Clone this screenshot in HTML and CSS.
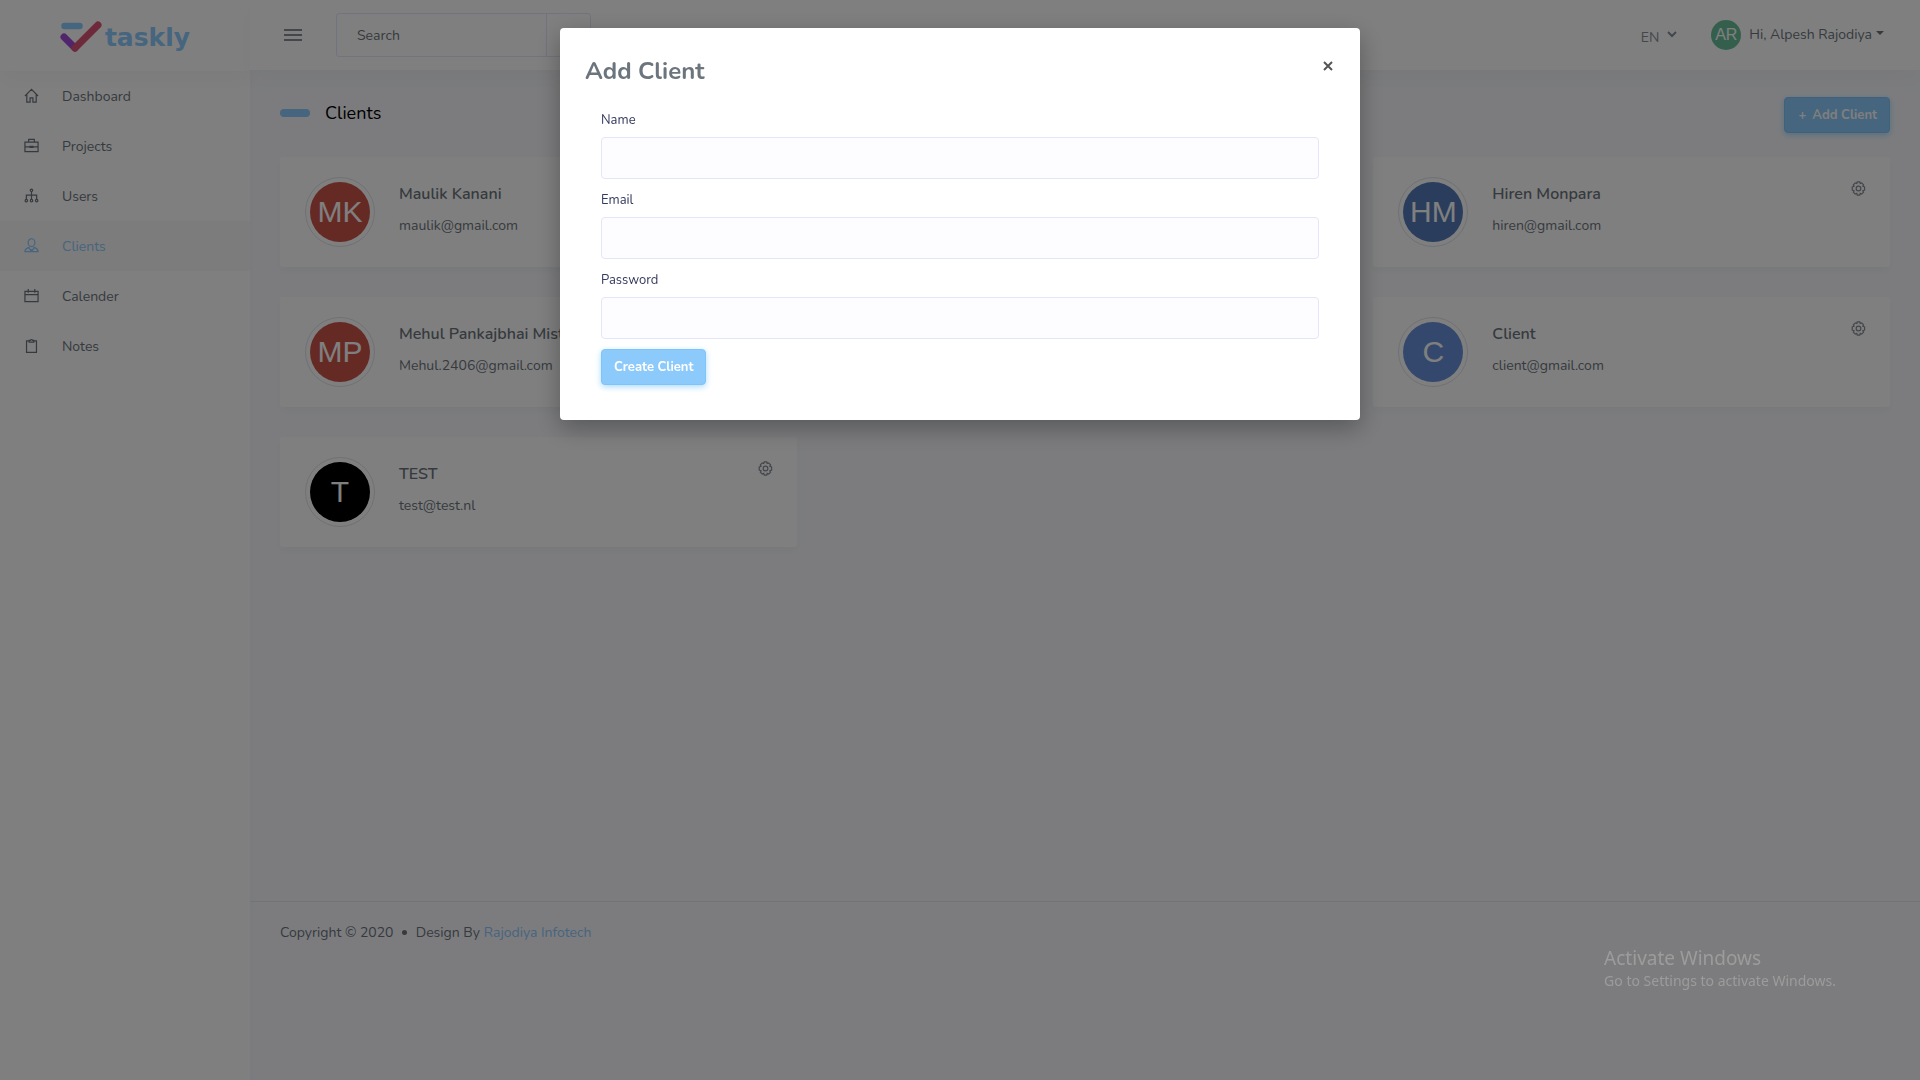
FILE: index.html
```html
<!DOCTYPE html>
<html lang="en">
  <head>
    <meta charset="UTF-8" />
    <meta name="viewport" content="width=device-width, initial-scale=1.0" />
    <title>Clients - Taskly</title>
    <link rel="stylesheet" href="styles.css">
  </head>
  <body>
    <div class="app">
      <aside class="sidebar">
        <a class="brand" href="#">
          <svg class="brand-mark" viewBox="0 0 42 32" fill="none" stroke-width="7" stroke-linecap="round">
            <path d="M4.500 6h15" stroke="#8dcafc" stroke-width="6.500" />
            <path d="M4 17l11 11" stroke="#a24bd8" />
            <path d="M15 28L38 5" stroke="#dc5276" />
          </svg>
          <span class="brand-name">taskly</span>
        </a>
        <nav class="menu">
          <a href="#">
            <svg class="icon" viewBox="0 0 16 16"><path d="M1 8.500L8 1.500l7 7M3 7v8h3.500v-4.500h3V15H13V7" /></svg>
            Dashboard
          </a>
          <a href="#">
            <svg class="icon" viewBox="0 0 16 16"><path d="M1 4.500h14v10H1zM5 4.500v-3h6v3M1 9.500h5.500M9.500 9.500H15M6.500 9h3v1h-3z" /></svg>
            Projects
          </a>
          <a href="#">
            <svg class="icon" viewBox="0 0 16 16"><circle cx="8" cy="2.500" r="1.300" /><circle cx="2.500" cy="13.500" r="1.300" /><circle cx="8" cy="13.500" r="1.300" /><circle cx="13.500" cy="13.500" r="1.300" /><path d="M8 4v8M2.500 12V7.500h11V12" /></svg>
            Users
          </a>
          <a class="active" href="#">
            <svg class="icon" viewBox="0 0 16 16"><ellipse cx="8" cy="5" rx="3.600" ry="4.200" /><path d="M6 9.500C3.500 11 1 11 1 14.500h14c0-3.500-2.500-3.500-5-5M5 11l3 2 3-2M8 13l-2 1.500M8 13l2 1.500" /></svg>
            Clients
          </a>
          <a href="#">
            <svg class="icon" viewBox="0 0 16 16"><path d="M1 3.500h14v11H1zM1 7h14M4.500 1v4M11.500 1v4" /></svg>
            Calender
          </a>
          <a href="#">
            <svg class="icon" viewBox="0 0 16 16"><path d="M5 3H2.700v12.300h10.600V3H11M5.500 4.500V2.500h1.300a1.300 1.300 0 0 1 2.400 0h1.300v2z" /></svg>
            Notes
          </a>
        </nav>
      </aside>

      <div class="page">
        <header class="topbar">
          <button class="toggle" type="button" aria-label="Toggle menu">
            <svg viewBox="0 0 18 12"><path d="M0 1h18M0 6h18M0 11h18" /></svg>
          </button>
          <form class="search">
            <input type="search" placeholder="Search" aria-label="Search" />
            <button type="submit" aria-label="Search"></button>
          </form>
          <button class="lang" type="button">
            EN
            <svg viewBox="0 0 10 10"><path d="M1 2l4 4 4-4" /></svg>
          </button>
          <button class="user" type="button">
            <span class="user-avatar">AR</span>
            <span class="user-name">Hi, Alpesh Rajodiya</span>
          </button>
        </header>

        <main class="content">
          <div class="section-header">
            <h1>Clients</h1>
            <button class="btn" type="button"><span class="plus">+</span>Add Client</button>
          </div>

          <div class="clients">
            <article class="card">
              <div class="avatar"><span class="red">MK</span></div>
              <div class="info">
                <h2>Maulik Kanani</h2>
                <p>maulik@gmail.com</p>
              </div>
            </article>
            <article class="card last">
              <div class="avatar"><span class="navy">HM</span></div>
              <div class="info">
                <h2>Hiren Monpara</h2>
                <p>hiren@gmail.com</p>
              </div>
              <button class="settings" type="button" aria-label="Settings">
                <svg class="icon" viewBox="0 0 16 16"><use href="#gear" /></svg>
              </button>
            </article>
            <article class="card">
              <div class="avatar"><span class="red">MP</span></div>
              <div class="info">
                <h2>Mehul Pankajbhai Mistry</h2>
                <p>Mehul.2406@gmail.com</p>
              </div>
            </article>
            <article class="card last">
              <div class="avatar"><span class="blue">C</span></div>
              <div class="info">
                <h2>Client</h2>
                <p>client@gmail.com</p>
              </div>
              <button class="settings" type="button" aria-label="Settings">
                <svg class="icon" viewBox="0 0 16 16"><use href="#gear" /></svg>
              </button>
            </article>
            <article class="card">
              <div class="avatar"><span class="black">T</span></div>
              <div class="info">
                <h2>TEST</h2>
                <p>test@test.nl</p>
              </div>
              <button class="settings" type="button" aria-label="Settings">
                <svg class="icon" viewBox="0 0 16 16"><use href="#gear" /></svg>
              </button>
            </article>
          </div>
        </main>

        <footer class="footer">
          Copyright © 2020 <span class="dot"></span> Design By <a href="#">Rajodiya Infotech</a>
        </footer>
      </div>
    </div>

    <div class="backdrop">
      <div class="modal" role="dialog" aria-modal="true" aria-labelledby="modalTitle">
        <div class="modal-header">
          <h2 id="modalTitle">Add Client</h2>
          <button class="close" type="button" aria-label="Close">
            <svg viewBox="0 0 10 10"><path d="M1 1l8 8M9 1L1 9" /></svg>
          </button>
        </div>
        <form class="modal-body">
          <label for="name">Name</label>
          <input type="text" id="name" />
          <label for="email">Email</label>
          <input type="email" id="email" />
          <label for="password">Password</label>
          <input type="password" id="password" />
          <button class="btn" type="submit">Create Client</button>
        </form>
      </div>
    </div>

    <div class="watermark">
      <p class="watermark-title">Activate Windows</p>
      <p>Go to Settings to activate Windows.</p>
    </div>

    <svg class="sprite" aria-hidden="true">
      <symbol id="gear" viewBox="0 0 16 16">
        <circle cx="8" cy="8" r="2.500" />
        <path d="M6.700 1h2.600l.5 1.700 1.600-.7 2 2-.8 1.600 1.900.8v3.200l-1.900.8.8 1.600-2 2-1.600-.8-.5 1.800H6.700l-.6-1.800-1.600.8-2-2 .8-1.600L1.300 9.600V6.400l2-.8-.8-1.600 2-2 1.600.7z" />
      </symbol>
    </svg>
  </body>
</html>
```

FILE: styles.css
```css
* {
  box-sizing: border-box;
}

body {
  margin: 0;
  font-family: "Nunito", "Open Sans", sans-serif;
  font-size: 14px;
  line-height: 24px;
  color: #6c757d;
  background-color: #f8f9fc;
}

h1,
h2,
p {
  margin: 0;
}

a {
  color: #8dcafc;
  text-decoration: none;
}

button,
input {
  font-family: inherit;
  font-size: 14px;
  color: inherit;
}

button {
  padding: 0;
  border: none;
  background: none;
  cursor: pointer;
}

svg {
  fill: none;
  stroke: currentColor;
}

.icon {
  width: 15px;
  height: 15px;
  stroke-width: 1.3;
}

.sprite {
  display: none;
}

.app {
  display: flex;
  min-height: 100vh;
}

/* Sidebar */
.sidebar {
  width: 250px;
  flex-shrink: 0;
  background-color: #fff;
  box-shadow: 0 4px 8px rgba(0, 0, 0, 0.03);
}

.brand {
  display: flex;
  align-items: center;
  justify-content: center;
  gap: 3px;
  height: 71px;
  font-family: "DejaVu Sans", sans-serif;
  font-size: 25px;
  font-weight: bold;
  box-shadow: 0 10px 20px rgba(0, 0, 0, 0.03);
}

.brand-mark {
  width: 42px;
  height: 32px;
}

.brand-name {
  padding-top: 5px;
}

.menu a {
  display: flex;
  align-items: center;
  gap: 23px;
  height: 50px;
  padding: 2px 0 0 24px;
  color: #6c757d;
}

.menu .icon {
  margin-bottom: 4px;
}

.menu a.active {
  color: #8dcafc;
  background-color: #f8f9fa;
}

/* Top bar */
.page {
  display: flex;
  flex: 1;
  flex-direction: column;
  min-width: 0;
}

.topbar {
  display: flex;
  align-items: center;
  height: 70px;
  padding: 0 36px 0 34px;
  background-color: #fff;
  box-shadow: 0 10px 20px rgba(0, 0, 0, 0.03);
}

.toggle {
  color: #868e96;
}

.toggle svg {
  display: block;
  width: 18px;
  height: 12px;
  stroke-width: 2;
}

.search {
  display: flex;
  height: 44px;
  margin-left: 34px;
  margin-right: auto;
  border: 1px solid #e4e6fc;
  border-radius: 3px;
}

.search input {
  width: 209px;
  padding: 0 20px;
  border: none;
  outline: none;
  background: none;
}

.search input::placeholder {
  color: #6c757d;
  opacity: 1;
}

.search button {
  width: 44px;
  border-left: 1px solid #e4e6fc;
}

.lang {
  display: flex;
  align-items: center;
  gap: 8px;
  margin-right: 34px;
  padding-top: 4px;
  color: #868e96;
}

.lang svg {
  width: 10px;
  height: 10px;
  margin-bottom: 4px;
  stroke-width: 2;
}

.user {
  display: flex;
  align-items: center;
  gap: 8px;
}

.user-avatar {
  width: 30px;
  height: 30px;
  border-radius: 50%;
  font-family: "Liberation Sans", sans-serif;
  font-size: 16px;
  line-height: 30px;
  color: #fff;
  background-color: #6abf9b;
}

.user-name {
  margin-bottom: 2px;
}

.user-name::after {
  content: "";
  display: inline-block;
  margin-left: 4px;
  vertical-align: 4px;
  border: 4px solid transparent;
  border-top-color: currentColor;
  border-bottom: none;
}

/* Clients list */
.content {
  flex: 1;
  padding: 27px 30px 30px;
}

.section-header {
  display: flex;
  align-items: flex-start;
  justify-content: space-between;
  margin-bottom: 24px;
}

.section-header h1 {
  display: flex;
  align-items: center;
  gap: 15px;
  font-size: 18px;
  font-weight: 400;
  line-height: 32px;
  color: #000;
}

.section-header h1::before {
  content: "";
  width: 30px;
  height: 8px;
  border-radius: 5px;
  background-color: #8dcafc;
}

.btn {
  height: 36px;
  padding: 0 12px;
  border: 1px solid #80c3f8;
  border-radius: 4px;
  font-size: 13px;
  font-weight: 700;
  color: #fff;
  background-color: #8dcafc;
  box-shadow: 0 2px 6px #acdcff;
}

.plus {
  margin: 0 6px 0 2px;
}

.clients {
  display: grid;
  grid-template-columns: repeat(3, 1fr);
  gap: 30px;
}

.card {
  display: flex;
  align-items: flex-start;
  padding: 20px 24px 20px 25px;
  border-radius: 3px;
  background-color: #fff;
  box-shadow: 0 4px 8px rgba(0, 0, 0, 0.03);
}

.card.last {
  grid-column: 3;
}

.avatar {
  padding: 4px;
  border: 1px solid #dee2e6;
  border-radius: 50%;
}

.avatar span {
  display: block;
  width: 60px;
  height: 60px;
  border-radius: 50%;
  font-family: "Liberation Sans", sans-serif;
  font-size: 30px;
  line-height: 60px;
  text-align: center;
  color: #fff;
}

.avatar .red {
  background-color: #cc544b;
}

.avatar .navy {
  background-color: #547bb8;
}

.avatar .blue {
  background-color: #6691d8;
}

.avatar .black {
  background-color: #000;
}

.info {
  flex: 1;
  padding: 5px 0 0 24px;
}

.info h2 {
  margin-bottom: 8px;
  font-size: 16px;
  font-weight: 600;
}

.settings {
  height: 23px;
  color: #868e96;
}

.settings .icon {
  display: block;
}

/* Footer */
.footer {
  height: 179px;
  padding: 19px 30px;
  border-top: 1px solid #e3eaef;
}

.dot {
  display: inline-block;
  width: 5px;
  height: 5px;
  margin: 0 5px 2px;
  border-radius: 50%;
  background-color: currentColor;
}

/* Modal */
.backdrop {
  position: fixed;
  inset: 0;
  padding: 28px;
  background-color: rgba(0, 0, 0, 0.5);
}

.modal {
  max-width: 800px;
  margin: 0 auto;
  border-radius: 4px;
  background-color: #fff;
  box-shadow: 0 8px 24px rgba(0, 0, 0, 0.3);
}

.modal-header {
  display: flex;
  align-items: flex-start;
  justify-content: space-between;
  padding: 25px 27px 0 25px;
}

.modal-header h2 {
  font-size: 24px;
  font-weight: 700;
  line-height: 36px;
}

.close {
  padding: 8px 0;
  color: #555;
}

.close svg {
  display: block;
  width: 10px;
  height: 10px;
  stroke-width: 2;
}

.modal-body {
  padding: 18px 41px 35px;
}

.modal-body label {
  display: block;
  margin-bottom: 4px;
  font-size: 13px;
  line-height: 26px;
  color: #34395e;
}

.modal-body input {
  display: block;
  width: 100%;
  height: 42px;
  margin-bottom: 8px;
  padding: 10px 15px;
  border: 1px solid #e4e6fc;
  border-radius: 4px;
  background-color: #fdfdff;
}

.modal-body .btn {
  margin-top: 2px;
}

/* Desktop activation notice */
.watermark {
  position: fixed;
  right: 84px;
  bottom: 89px;
  font-family: "Noto Sans", sans-serif;
  font-size: 14px;
  line-height: 20px;
  color: #9c9c9c;
}

.watermark-title {
  font-size: 19px;
  line-height: 26px;
}
```
